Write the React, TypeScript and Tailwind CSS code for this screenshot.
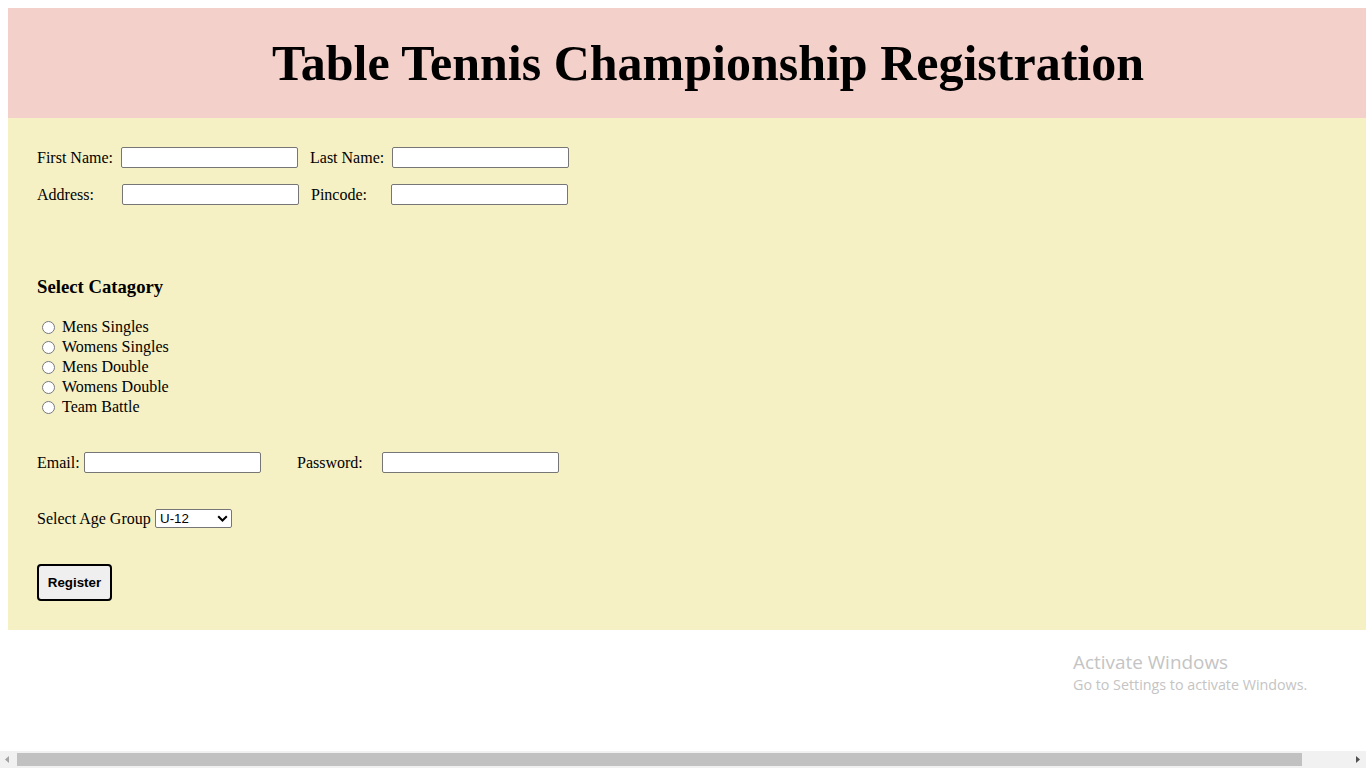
import React from "react";

const inputCls =
  "block h-[21px] w-[177px] rounded-[2px] border border-[#767676] bg-white px-[2px] text-[13.33px] font-['Liberation_Sans',Arial,sans-serif]";

function Radio({ label }: { label: string }) {
  return (
    <div className="flex h-[20px] items-center">
      <input type="radio" name="category" className="m-0 ml-[5px] mr-[3px] h-[13px] w-[13px]" />
      <span className="ml-[4px] leading-[20px]">{label}</span>
    </div>
  );
}

export default function App() {
  return (
    <div className="relative h-screen w-screen overflow-hidden bg-white font-['Liberation_Serif','Times_New_Roman',serif] text-[16px] text-black">
      <div className="w-[1416px] p-2">
        <div className="flex h-[110px] items-center justify-center bg-[#f4d0ca]">
          <h1 className="text-[50px] font-bold leading-[55px]">Table Tennis Championship Registration</h1>
        </div>
        <div className="bg-[#f6f1c4] px-[29px] py-[29px]">
          <div className="flex h-[21px] items-center">
            <span className="w-[84px] -translate-y-[0.5px]">First Name:</span>
            <input type="text" className={inputCls} />
            <span className="ml-[12px] w-[82px] -translate-y-[0.5px]">Last Name:</span>
            <input type="text" className={inputCls} />
          </div>
          <div className="mt-[16px] flex h-[21px] items-center">
            <span className="w-[85px] -translate-y-[0.5px]">Address:</span>
            <input type="text" className={inputCls} />
            <span className="ml-[12px] w-[80px] -translate-y-[0.5px]">Pincode:</span>
            <input type="text" className={inputCls} />
          </div>

          <h3 className="mt-[71px] h-[22px] text-[18.72px] font-bold leading-[22px]">Select Catagory</h3>

          <div className="mt-[19px]">
            <Radio label="Mens Singles" />
            <Radio label="Womens Singles" />
            <Radio label="Mens Double" />
            <Radio label="Womens Double" />
            <Radio label="Team Battle" />
          </div>

          <div className="mt-[35px] flex h-[21px] items-center">
            <span className="w-[47px]">Email:</span>
            <input type="text" className={inputCls} />
            <span className="ml-[36px] w-[85px]">Password:</span>
            <input type="password" className={inputCls} />
          </div>

          <div className="mt-[36px] flex h-[19px] items-center">
            <span className="w-[118px]">Select Age Group</span>
            <div className="relative h-[19px] w-[77px]">
              <select className="block h-full w-full appearance-none rounded-[2px] border border-[#767676] bg-white pl-[4px] text-[13.33px] leading-[17px] text-black font-['Liberation_Sans',Arial,sans-serif]">
                <option>U-12</option>
                <option>U-15</option>
                <option>U-18</option>
                <option>Open</option>
              </select>
              <svg
                className="pointer-events-none absolute right-[4px] top-[6px]"
                width="11"
                height="7"
                viewBox="0 0 11 7"
              >
                <path d="M1.2 1.2 L5.5 5.5 L9.8 1.2" fill="none" stroke="#000" strokeWidth="2" />
              </svg>
            </div>
          </div>

          <button
            type="button"
            className="mt-[36px] flex h-[37px] w-[75px] items-center justify-center rounded-[4px] border-2 border-black bg-[#efefef] text-[13.33px] font-bold font-['Liberation_Sans',Arial,sans-serif]"
          >
            Register
          </button>
        </div>
      </div>

      <div className="pointer-events-none absolute left-[1073px] top-[649px] font-['Open_Sans','Noto_Sans',sans-serif] text-[#c4c4c4]">
        <div className="text-[18.9px] leading-[26px]">Activate Windows</div>
        <div className="text-[14.3px] leading-[19px]">Go to Settings to activate Windows.</div>
      </div>

      <div className="absolute bottom-0 left-0 h-[17px] w-full bg-[#f1f1f1]">
        <div className="absolute left-[17px] top-[2px] h-[13px] w-[1285px] bg-[#c1c1c1]" />
        <svg className="absolute left-[5px] top-[5px]" width="4" height="7" viewBox="0 0 4 7">
          <path d="M4 0 L0 3.5 L4 7 Z" fill="#a3a3a3" />
        </svg>
        <svg className="absolute left-[1356px] top-[5px]" width="4" height="7" viewBox="0 0 4 7">
          <path d="M0 0 L4 3.5 L0 7 Z" fill="#505050" />
        </svg>
      </div>
    </div>
  );
}
